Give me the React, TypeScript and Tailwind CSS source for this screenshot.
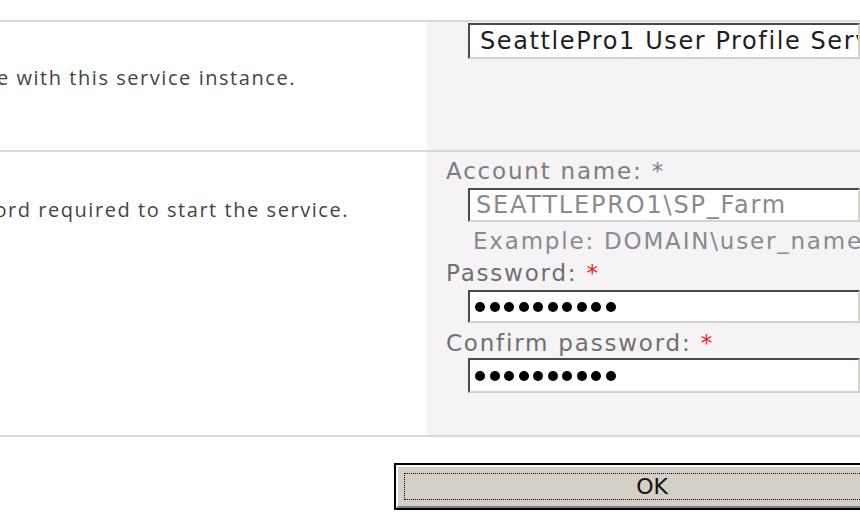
import React from 'react';

const labelFont = { fontFamily: '"DejaVu Sans", Verdana, sans-serif' };

function Inset({ children, className = '' }: { children?: React.ReactNode; className?: string }) {
  return (
    <div
      className={`flex items-center overflow-hidden whitespace-nowrap border-2 border-t-[#4a4a4a] border-l-[#4a4a4a] border-b-[#d6d3cc] border-r-[#d6d3cc] bg-white ${className}`}
    >
      {children}
    </div>
  );
}

function Dots() {
  return (
    <div className="flex items-center gap-[4.5px] pl-[5px]">
      {Array.from({ length: 10 }).map((_, i) => (
        <span key={i} className="block h-[10px] w-[10px] rounded-full bg-black" />
      ))}
    </div>
  );
}

function Divider() {
  return <div className="h-[2px] w-full bg-[#d9d8da]" />;
}

export default function App() {
  return (
    <div className="h-[520px] w-[860px] overflow-hidden bg-white" style={labelFont}>
      <div className="h-[20px]" />
      <Divider />

      {/* service application */}
      <div className="flex h-[128px]">
        <div className="flex w-[427px] shrink-0 justify-end overflow-hidden pr-[131px] pt-[44px]">
          <p className="whitespace-nowrap font-['Open_Sans'] text-[20px] leading-[24px] tracking-[1.55px] text-[#444]">
            Select the User Profile Application that you want to associate with this service instance.
          </p>
        </div>
        <div className="min-w-0 flex-1 bg-[#f6f3f7] pl-[41px] pt-[1px]">
          <Inset className="h-[36px] pl-[10px] text-[24px] tracking-[1.6px] text-[#1e1e1e]">
            SeattlePro1 User Profile Service Application
          </Inset>
        </div>
      </div>

      <Divider />

      {/* account */}
      <div className="flex h-[283px]">
        <div className="flex w-[427px] shrink-0 justify-end overflow-hidden pr-[78px] pt-[46px]">
          <p className="whitespace-nowrap font-['Open_Sans'] text-[20px] leading-[24px] tracking-[1.55px] text-[#444]">
            Enter the account name and password required to start the service.
          </p>
        </div>
        <div className="min-w-0 flex-1 overflow-hidden whitespace-nowrap bg-[#f6f3f7] pl-[19px] pt-[7px] text-[23px] leading-[24px] tracking-[1.8px]">
          <div className="text-[#7d7d7d]">Account name: *</div>
          <div className="pl-[22px] pt-[5px]">
            <Inset className="h-[34px] pl-[6px] text-[24px] text-[#8a8a8a]">SEATTLEPRO1\SP_Farm</Inset>
            <div className="pl-[5px] pt-[7px] text-[#8a8a8a]">Example: DOMAIN\user_name</div>
          </div>
          <div className="pt-[8px] text-[#6f6f6f]">
            Password: <span className="text-[#ff1a1a]">*</span>
          </div>
          <div className="pl-[22px] pt-[5px]">
            <Inset className="h-[33px]">
              <Dots />
            </Inset>
          </div>
          <div className="pt-[8px] text-[#6f6f6f]">
            Confirm password: <span className="text-[#ff1a1a]">*</span>
          </div>
          <div className="pl-[22px] pt-[3px]">
            <Inset className="h-[35px]">
              <Dots />
            </Inset>
          </div>
        </div>
      </div>

      <Divider />

      <div className="pl-[394px] pt-[26px]">
        <button className="block h-[47px] w-[516px] border-2 border-black bg-[#d4d0c8] p-0">
          <div className="h-full border-2 border-t-white border-l-white border-b-[#808080] border-r-[#808080] p-[6px]">
            <div className="flex h-full items-center justify-center border border-dotted border-black text-[22px] leading-none text-[#111]">
              OK
            </div>
          </div>
        </button>
      </div>
    </div>
  );
}
